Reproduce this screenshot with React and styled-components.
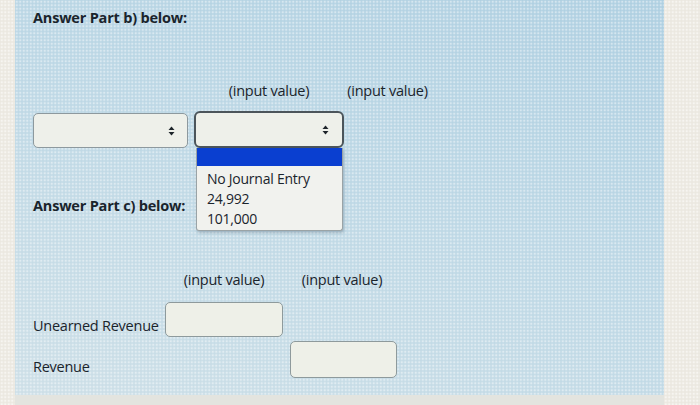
import React from "react";
import styled, { createGlobalStyle } from "styled-components";

const GlobalStyle = createGlobalStyle`
    html, body {
        margin: 0;
        padding: 0;
        background: #e9e7df;
    }
    body {
        font-family: "Open Sans", "Liberation Sans", sans-serif;
        color: #1a242c;
    }
`;

const journalOptions = ["No Journal Entry", "24,992", "101,000"];

const Arrows = () => (
    <svg width="7" height="10" viewBox="0 0 7 10">
        <path d="M3.5 0.5 L6.5 4 L0.5 4 Z" fill="#1d242a"/>
        <path d="M3.5 9.5 L6.5 6 L0.5 6 Z" fill="#1d242a"/>
    </svg>
);

const App = () => {
    return (
        <Screen>
            <GlobalStyle/>
            <Bezel/>
            <Panel>
                <Heading>Answer Part b) below:</Heading>

                <PartB>
                    <span/>
                    <ColumnHead>(input value)</ColumnHead>
                    <ColumnHead shift={-7}>(input value)</ColumnHead>

                    <Select>
                        <Arrows/>
                    </Select>
                    <SelectWrap>
                        <Select focused>
                            <Arrows/>
                        </Select>
                        <Menu>
                            <MenuHighlight/>
                            {journalOptions.map(option => (
                                <MenuItem key={option}>{option}</MenuItem>
                            ))}
                        </Menu>
                    </SelectWrap>
                </PartB>

                <Heading className="part-c">Answer Part c) below:</Heading>

                <PartC>
                    <span/>
                    <ColumnHead>(input value)</ColumnHead>
                    <ColumnHead>(input value)</ColumnHead>

                    <AccountLabel>Unearned Revenue</AccountLabel>
                    <ValueBox/>
                    <span/>

                    <AccountLabel>Revenue</AccountLabel>
                    <span/>
                    <ValueBox className="credit"/>
                </PartC>
            </Panel>
            <Bezel right/>
        </Screen>
    );
};

export default App;

const Screen = styled.div`
    display: flex;
    width: 700px;
    height: 405px;
    overflow: hidden;
`;

const Bezel = styled.div`
    flex: 0 0 ${props => props.right ? "36px" : "15px"};
    background-color: #ebe8e0;
    background-image: radial-gradient(circle, rgba(255, 255, 255, 0.55) 0.9px, transparent 1.5px);
    background-size: 3.5px 3.5px;
`;

const Panel = styled.div`
    flex: 1;
    position: relative;
    box-sizing: border-box;
    padding: 9px 0 0 18px;
    background-color: #bdd8e5;
    background-image:
        radial-gradient(circle, rgba(255, 255, 255, 0.45) 0.9px, transparent 1.5px),
        linear-gradient(200deg, #aecfe1 0%, #bcd7e5 45%, #cddfe7 100%);
    background-size: 3.5px 3.5px, 100% 100%;
    border-bottom: 10px solid #e3e4df;
`;

const Heading = styled.div`
    font-weight: 700;
    font-size: 14.5px;
    line-height: 18px;
    letter-spacing: -0.2px;
    &.part-c {
        margin-top: 49px;
    }
`;

const PartB = styled.div`
    display: grid;
    grid-template-columns: 155px 150px 82px;
    column-gap: 6px;
    margin-top: 55px;
    align-items: end;
`;

const PartC = styled.div`
    display: grid;
    grid-template-columns: 128px 118px 110px;
    column-gap: 4px;
    margin-top: 56px;
    align-items: end;
`;

const ColumnHead = styled.div`
    font-size: 14.5px;
    line-height: 18px;
    text-align: center;
    letter-spacing: -0.25px;
    margin-bottom: 11px;
    margin-left: ${props => props.shift || 0}px;
    white-space: nowrap;
    ${PartC} & {
        margin-bottom: 13px;
    }
`;

const SelectWrap = styled.div`
    position: relative;
`;

const Select = styled.div`
    box-sizing: border-box;
    height: ${props => props.focused ? "37px" : "35px"};
    display: flex;
    align-items: center;
    justify-content: flex-end;
    padding-right: ${props => props.focused ? "13px" : "12px"};
    background: #eef0ea;
    border: ${props => props.focused ? "2px solid #4c555b" : "1px solid #8d999e"};
    border-radius: ${props => props.focused ? "6px" : "5px"};
`;

const Menu = styled.div`
    position: absolute;
    top: 37px;
    left: 2px;
    width: 147px;
    box-sizing: border-box;
    padding-bottom: 1px;
    background: #f1f2ee;
    border: 1px solid #9aa3a6;
    border-top: none;
    border-radius: 0 0 3px 3px;
    box-shadow: 1px 2px 3px rgba(40, 60, 80, 0.25);
`;

const MenuHighlight = styled.div`
    height: 18px;
    background: #0a3fd0;
    margin-bottom: 3px;
`;

const MenuItem = styled.div`
    font-size: 14px;
    line-height: 20px;
    padding-left: 10px;
    letter-spacing: -0.25px;
`;

const AccountLabel = styled.div`
    font-size: 14.5px;
    line-height: 18px;
    letter-spacing: -0.25px;
    white-space: nowrap;
    margin-bottom: 2px;
`;

const ValueBox = styled.div`
    box-sizing: border-box;
    height: 35px;
    background: #eef0e8;
    border: 1px solid #8e9a9c;
    border-radius: 5px;
    &.credit {
        height: 37px;
        margin-top: 4px;
        margin-left: 3px;
    }
`;
